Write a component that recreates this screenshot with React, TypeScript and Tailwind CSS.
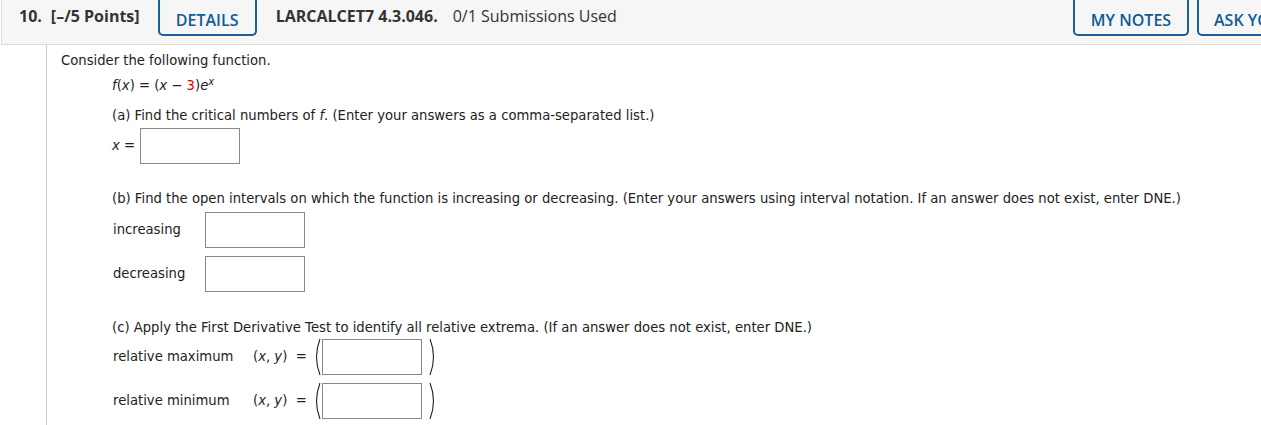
import React from 'react';

const body = "font-['DejaVu_Sans',Verdana,sans-serif] text-[13.2px] text-[#222]";

function Box() {
  return <div className="w-[100px] h-[36px] border border-[#888] bg-white" />;
}

function Paren({ side }: { side: 'l' | 'r' }) {
  return (
    <svg width="10" height="40" viewBox="0 0 10 40" className="shrink-0">
      {side === 'l' ? (
        <path d="M8 2 Q1 20 8 38" fill="none" stroke="#222" strokeWidth="1.1" />
      ) : (
        <path d="M2 2 Q9 20 2 38" fill="none" stroke="#222" strokeWidth="1.1" />
      )}
    </svg>
  );
}

function HeadButton({ label, className }: { label: string; className?: string }) {
  return (
    <div
      className={`h-[36px] border-2 border-t-0 border-[#1a5f97] rounded-b-[5px] flex items-end justify-center pb-[2px] text-[16px] font-semibold text-[#115b94] ${className ?? ''}`}
    >
      {label}
    </div>
  );
}

export default function App() {
  return (
    <div className="w-[1261px] h-[425px] overflow-hidden bg-white">
      <header className="ml-px h-[45px] flex items-start border-l border-b border-[#dcdcdc] bg-[#f6f6f6] font-['Open_Sans',sans-serif] text-[#333]">
        <div className="pt-[4px] pl-[17px] flex text-[16px] font-bold">
          <span>10.</span>
          <span className="ml-[9px]">[–/5 Points]</span>
        </div>
        <HeadButton label="DETAILS" className="ml-[18px] w-[99px]" />
        <div className="pt-[4px] ml-[19px] flex text-[16px]">
          <span className="font-bold">LARCALCET7 4.3.046.</span>
          <span className="ml-[15px]">0/1 Submissions Used</span>
        </div>
        <HeadButton label="MY NOTES" className="ml-auto w-[116px]" />
        <HeadButton label="ASK YOUR TEACHER" className="ml-[8px] w-[200px] shrink-0 justify-start pl-[15px] -mr-[136px]" />
      </header>

      <div className={`ml-[46px] h-[380px] border-l border-[#cfcfcf] pl-[14px] pt-[8px] ${body}`}>
        <p className="leading-[16px]">Consider the following function.</p>
        <div className="pl-[51px]">
          <p className="mt-[9px] leading-[16px]">
            <i>f</i>(<i>x</i>) = (<i>x</i> − <span className="text-[#e00000]">3</span>)<i>e</i>
            <sup className="text-[10px]"><i>x</i></sup>
          </p>
          <p className="mt-[14px] leading-[16px]">
            (a) Find the critical numbers of <i>f</i>. (Enter your answers as a comma-separated list.)
          </p>
          <div className="mt-[4px] flex items-center">
            <span className="w-[28px]"><i>x</i> =</span>
            <Box />
          </div>
          <p className="mt-[27px] leading-[16px]">
            (b) Find the open intervals on which the function is increasing or decreasing. (Enter your answers using interval notation. If an answer does not exist, enter DNE.)
          </p>
          <div className="mt-[5px] flex items-center">
            <span className="w-[93px] pl-px">increasing</span>
            <Box />
          </div>
          <div className="mt-[8px] flex items-center">
            <span className="w-[93px] pl-px">decreasing</span>
            <Box />
          </div>
          <p className="mt-[28px] leading-[16px]">
            (c) Apply the First Derivative Test to identify all relative extrema. (If an answer does not exist, enter DNE.)
          </p>
          <div className="mt-[1px] flex items-center">
            <span className="w-[141px] pl-px">relative maximum</span>
            <span className="w-[59px]">(<i>x</i>, <i>y</i>)&nbsp; =</span>
            <Paren side="l" />
            <Box />
            <span className="w-[6px]" />
            <Paren side="r" />
          </div>
          <div className="mt-[4px] flex items-center">
            <span className="w-[141px] pl-px">relative minimum</span>
            <span className="w-[59px]">(<i>x</i>, <i>y</i>)&nbsp; =</span>
            <Paren side="l" />
            <Box />
            <span className="w-[6px]" />
            <Paren side="r" />
          </div>
        </div>
      </div>
    </div>
  );
}
